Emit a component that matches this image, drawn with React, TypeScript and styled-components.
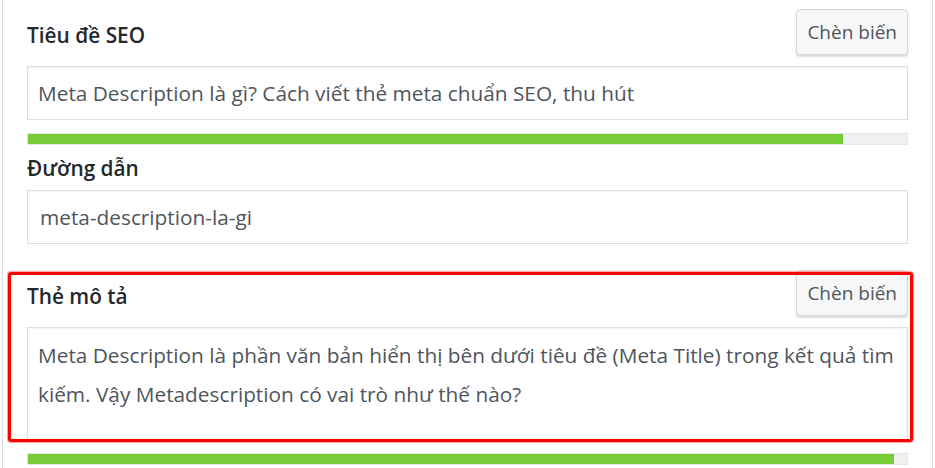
import React from "react";
import styled, { createGlobalStyle } from "styled-components";

const GlobalStyle = createGlobalStyle`
  html, body {
    margin: 0;
    padding: 0;
    background: #ffffff;
    overflow: hidden;
  }

  body {
    font-family: "Open Sans", "Noto Sans", "DejaVu Sans", sans-serif;
  }
`;

const Panel = styled.div`
  margin: 0 2px;
  height: 468px;
  box-sizing: border-box;
  border-left: 1px solid #dcdcdc;
  border-right: 1px solid #dcdcdc;
  padding: 9px 24px 0 24px;
  background: #fff;
`;

const Field = styled.section<{ $top?: number }>`
  position: relative;
  margin-top: ${(p) => p.$top ?? 0}px;
`;

const Header = styled.div`
  display: flex;
  justify-content: space-between;
  align-items: flex-end;
  height: 48px;
  margin-bottom: 9px;
`;

const Label = styled.label<{ $gap?: number }>`
  display: block;
  font-size: 20.8px;
  line-height: 28px;
  font-weight: 600;
  color: #23282d;
  margin-bottom: ${(p) => p.$gap ?? 0}px;
`;

const InsertButton = styled.button`
  align-self: flex-start;
  height: 46px;
  padding: 0 10px;
  font-family: inherit;
  font-size: 19px;
  color: #50555c;
  background: #f7f7f7;
  border: 1px solid #d6d6d6;
  border-radius: 4px;
  box-shadow: 0 2px 2px rgba(0, 0, 0, 0.14);
`;

const TextBox = styled.div<{ $pad?: number }>`
  box-sizing: border-box;
  height: 54px;
  display: flex;
  align-items: center;
  padding-left: ${(p) => p.$pad ?? 10}px;
  border: 1px solid #dedede;
  box-shadow: inset 0 1px 2px rgba(0, 0, 0, 0.05);
  font-size: 20.8px;
  color: #50555c;
  white-space: nowrap;
  background: #fff;
`;

const TextArea = styled.div`
  box-sizing: border-box;
  height: 114px;
  padding: 8px 10px 0 10px;
  border: 1px solid #dedede;
  box-shadow: inset 0 1px 2px rgba(0, 0, 0, 0.05);
  font-size: 20.8px;
  line-height: 39px;
  color: #50555c;
  background: #fff;
`;

const Line = styled.div`
  white-space: nowrap;
`;

const Track = styled.div<{ $top?: number }>`
  box-sizing: border-box;
  height: 12px;
  margin-top: ${(p) => p.$top ?? 13}px;
  background: #f1f1f1;
  border: 1px solid #e6e6e6;
  overflow: hidden;
`;

const Fill = styled.div`
  height: 100%;
  background: #78cc3a;
`;

const Highlight = styled.div`
  position: absolute;
  left: -19px;
  top: 2px;
  width: 905px;
  height: 170px;
  box-sizing: border-box;
  border: 3px solid #ff0000;
  border-radius: 3px;
  box-shadow: 0 0 1px 1px rgba(255, 60, 60, 0.5);
  pointer-events: none;
`;

const Progress = ({ value, top }: { value: number; top?: number }) => (
  <Track $top={top}>
    <Fill style={{ width: `${value}%` }} />
  </Track>
);

export default function App() {
  return (
    <>
      <GlobalStyle />
      <Panel>
        <Field>
          <Header>
            <Label $gap={8}>Tiêu đề SEO</Label>
            <InsertButton>Chèn biến</InsertButton>
          </Header>
          <TextBox>Meta Description là gì? Cách viết thẻ meta chuẩn SEO, thu hút</TextBox>
          <Progress value={92.7} />
        </Field>

        <Field $top={9}>
          <Label $gap={8}>Đường dẫn</Label>
          <TextBox $pad={12}>meta-description-la-gi</TextBox>
        </Field>

        <Field $top={26}>
          <Header>
            <Label $gap={8}>Thẻ mô tả</Label>
            <InsertButton>Chèn biến</InsertButton>
          </Header>
          <TextArea>
            <Line>
              Meta Description là phần văn bản hiển thị bên dưới tiêu đề (Meta Title) trong kết quả tìm
            </Line>
            <Line>kiếm. Vậy Metadescription có vai trò như thế nào?</Line>
          </TextArea>
          <Highlight />
          <Progress value={98.5} top={12} />
        </Field>
      </Panel>
    </>
  );
}
